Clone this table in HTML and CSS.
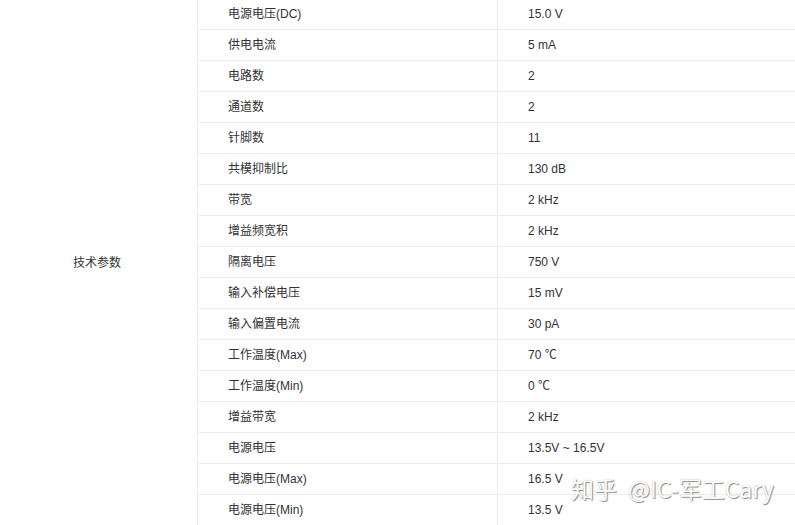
FILE: index.html
```html
<!DOCTYPE html>
<html>
<head>
<meta charset="utf-8">
<link rel="stylesheet" href="styles.css">
</head>
<body>
<div class="page">
<table class="spec">
<tbody>
<tr><td class="group" rowspan="17">技术参数</td><td class="name">电源电压(DC)</td><td class="val">15.0 V</td></tr>
<tr><td class="name">供电电流</td><td class="val">5 mA</td></tr>
<tr><td class="name">电路数</td><td class="val">2</td></tr>
<tr><td class="name">通道数</td><td class="val">2</td></tr>
<tr><td class="name">针脚数</td><td class="val">11</td></tr>
<tr><td class="name">共模抑制比</td><td class="val">130 dB</td></tr>
<tr><td class="name">带宽</td><td class="val">2 kHz</td></tr>
<tr><td class="name">增益频宽积</td><td class="val">2 kHz</td></tr>
<tr><td class="name">隔离电压</td><td class="val">750 V</td></tr>
<tr><td class="name">输入补偿电压</td><td class="val">15 mV</td></tr>
<tr><td class="name">输入偏置电流</td><td class="val">30 pA</td></tr>
<tr><td class="name">工作温度(Max)</td><td class="val">70 ℃</td></tr>
<tr><td class="name">工作温度(Min)</td><td class="val">0 ℃</td></tr>
<tr><td class="name">增益带宽</td><td class="val">2 kHz</td></tr>
<tr><td class="name">电源电压</td><td class="val">13.5V ~ 16.5V</td></tr>
<tr><td class="name">电源电压(Max)</td><td class="val">16.5 V</td></tr>
<tr><td class="name">电源电压(Min)</td><td class="val">13.5 V</td></tr>
</tbody>
</table>
<div class="watermark">知乎 @IC-军工Cary</div>
</div>
</body>
</html>
```
FILE: styles.css
```css
html, body {
  margin: 0;
  padding: 0;
  background: #fff;
  overflow: hidden;
}
.page {
  position: relative;
  width: 795px;
  height: 525px;
  overflow: hidden;
}
.spec {
  border-collapse: collapse;
  margin-top: -1px;
  width: 820px;
  font-family: "Liberation Sans", "Noto Sans CJK SC", sans-serif;
  font-size: 12px;
  color: #333;
}
.spec td {
  height: 30px;
  padding: 0;
  border-bottom: 1px solid #ebebeb;
  vertical-align: middle;
  line-height: 16px;
}
.spec tr:last-child td {
  border-bottom: none;
}
.spec .group {
  width: 124px;
  padding-left: 73px;
  padding-top: 2px;
  border-right: 1px solid #ebebeb;
  border-bottom: none;
}
.spec .name {
  width: 269px;
  padding-left: 30px;
  border-right: 1px solid #ebebeb;
}
.spec .val {
  padding-left: 30px;
}
.watermark {
  position: absolute;
  left: 571px;
  top: 473px;
  font-family: "Noto Sans CJK SC", "Liberation Sans", sans-serif;
  font-size: 23px;
  line-height: 30px;
  word-spacing: 6px;
  color: #fff;
  text-shadow: 1px 1px 1px #888, 0 0 1px #aaa;
  white-space: nowrap;
}
```
